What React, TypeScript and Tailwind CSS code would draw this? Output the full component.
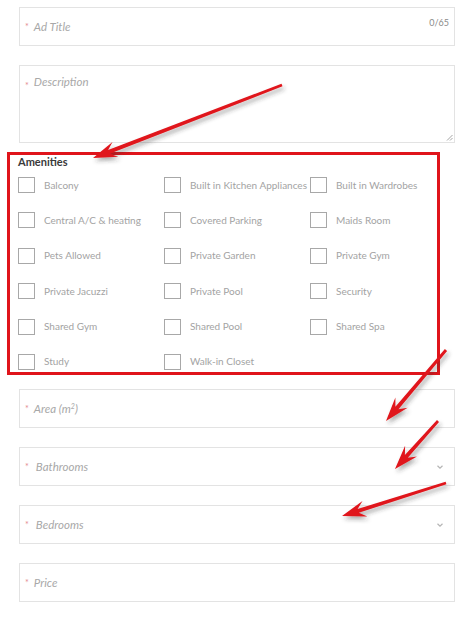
import React from "react";

const amenities = [
  "Balcony",
  "Built in Kitchen Appliances",
  "Built in Wardrobes",
  "Central A/C & heating",
  "Covered Parking",
  "Maids Room",
  "Pets Allowed",
  "Private Garden",
  "Private Gym",
  "Private Jacuzzi",
  "Private Pool",
  "Security",
  "Shared Gym",
  "Shared Pool",
  "Shared Spa",
  "Study",
  "Walk-in Closet",
];

// annotation arrows: [tailX, tailY, tipX, tipY]
const arrows: [number, number, number, number][] = [
  [282, 85, 93, 158],
  [446, 350, 386, 421],
  [438, 421, 395, 469],
  [446, 483, 342, 516],
];

function arrowPath(x1: number, y1: number, x2: number, y2: number) {
  const dx = x2 - x1;
  const dy = y2 - y1;
  const len = Math.hypot(dx, dy);
  const ux = dx / len;
  const uy = dy / len;
  const nx = -uy;
  const ny = ux;
  const headLen = 24;
  const headW = 8;
  const shaft = 2;
  const bx = x2 - ux * headLen;
  const by = y2 - uy * headLen;
  const nxp = x2 - ux * (headLen - 7);
  const nyp = y2 - uy * (headLen - 7);
  const pts = [
    [x1 + nx * shaft * 0.7, y1 + ny * shaft * 0.7],
    [nxp + nx * shaft, nyp + ny * shaft],
    [bx + nx * headW, by + ny * headW],
    [x2, y2],
    [bx - nx * headW, by - ny * headW],
    [nxp - nx * shaft, nyp - ny * shaft],
    [x1 - nx * shaft * 0.7, y1 - ny * shaft * 0.7],
  ];
  return pts.map((p) => `${p[0].toFixed(1)},${p[1].toFixed(1)}`).join(" ");
}

function Star() {
  return <span className="text-[#e38a92] text-[9px] not-italic mr-[5px]">*</span>;
}

function Field({ label, select, indent }: { label: React.ReactNode; select?: boolean; indent?: boolean }) {
  return (
    <div className="h-[39px] border border-[#e3e3e3] flex items-center pl-[5px] pr-[10px]">
      <Star />
      <span className={`italic text-[11.5px] text-[#a8a8a8] ${indent ? "ml-[2px]" : ""}`}>{label}</span>
      {select && (
        <svg className="ml-auto" width="8" height="6" viewBox="0 0 8 6">
          <path d="M1.5 1.8 L4 4.2 L6.5 1.8" fill="none" stroke="#b5b5b5" strokeWidth="1.2" />
        </svg>
      )}
    </div>
  );
}

export default function App() {
  return (
    <div className="relative w-[474px] h-[617px] bg-white font-['Lato',sans-serif] overflow-hidden">
      <div className="flex flex-col pt-[7px]">
        <div className="mx-[19px] h-[39px] border border-[#e3e3e3] relative flex items-center pl-[5px]">
          <Star />
          <span className="italic text-[11.5px] text-[#a8a8a8]">Ad Title</span>
          <span className="absolute right-[5px] top-[8px] text-[9px] text-[#8a8a8a]">0/65</span>
        </div>

        <div className="mx-[19px] mt-[19px] h-[78px] border border-[#e3e3e3] relative flex items-start pl-[5px] pt-[7px]">
          <span className="text-[#e38a92] text-[9px] mr-[5px] mt-[6px]">*</span>
          <span className="italic text-[11.5px] text-[#a8a8a8]">Description</span>
          <svg className="absolute right-[1px] bottom-[1px]" width="7" height="7" viewBox="0 0 7 7">
            <path d="M6.5 1 L1 6.5 M6.5 4 L4 6.5" stroke="#9a9a9a" strokeWidth="0.9" />
          </svg>
        </div>

        <div className="ml-[7px] mt-[9px] w-[433px] h-[223px] border-[3px] border-[#e0141b] pl-[8px]">
          <div className="text-[11px] leading-[14px] font-bold text-[#3a3a3a]">Amenities</div>
          <div className="grid grid-cols-[146px_146px_1fr] gap-y-[19.4px] mt-[8px]">
            {amenities.map((a) => (
              <div key={a} className="flex items-center h-[16px] whitespace-nowrap">
                <span className="w-[17px] h-[16px] border border-[#a8a8a8] shrink-0" />
                <span className="ml-[9px] text-[10px] text-[#a3a3a3]">{a}</span>
              </div>
            ))}
          </div>
        </div>

        <div className="flex flex-col gap-[19px] mx-[19px] mt-[14px]">
          <Field label={<>Area (m<sup className="text-[7px]">2</sup>)</>} />
          <Field label="Bathrooms" select indent />
          <Field label="Bedrooms" select indent />
          <Field label="Price" />
        </div>
      </div>

      <svg className="absolute inset-0 pointer-events-none" width="474" height="617" viewBox="0 0 474 617">
        <defs>
          <filter id="sh" x="-20%" y="-20%" width="140%" height="140%">
            <feDropShadow dx="2" dy="3" stdDeviation="2" floodColor="#333" floodOpacity="0.4" />
          </filter>
        </defs>
        {arrows.map((a, i) => (
          <polygon key={i} points={arrowPath(a[0], a[1], a[2], a[3])} fill="#e0141b" filter="url(#sh)" />
        ))}
      </svg>
    </div>
  );
}
